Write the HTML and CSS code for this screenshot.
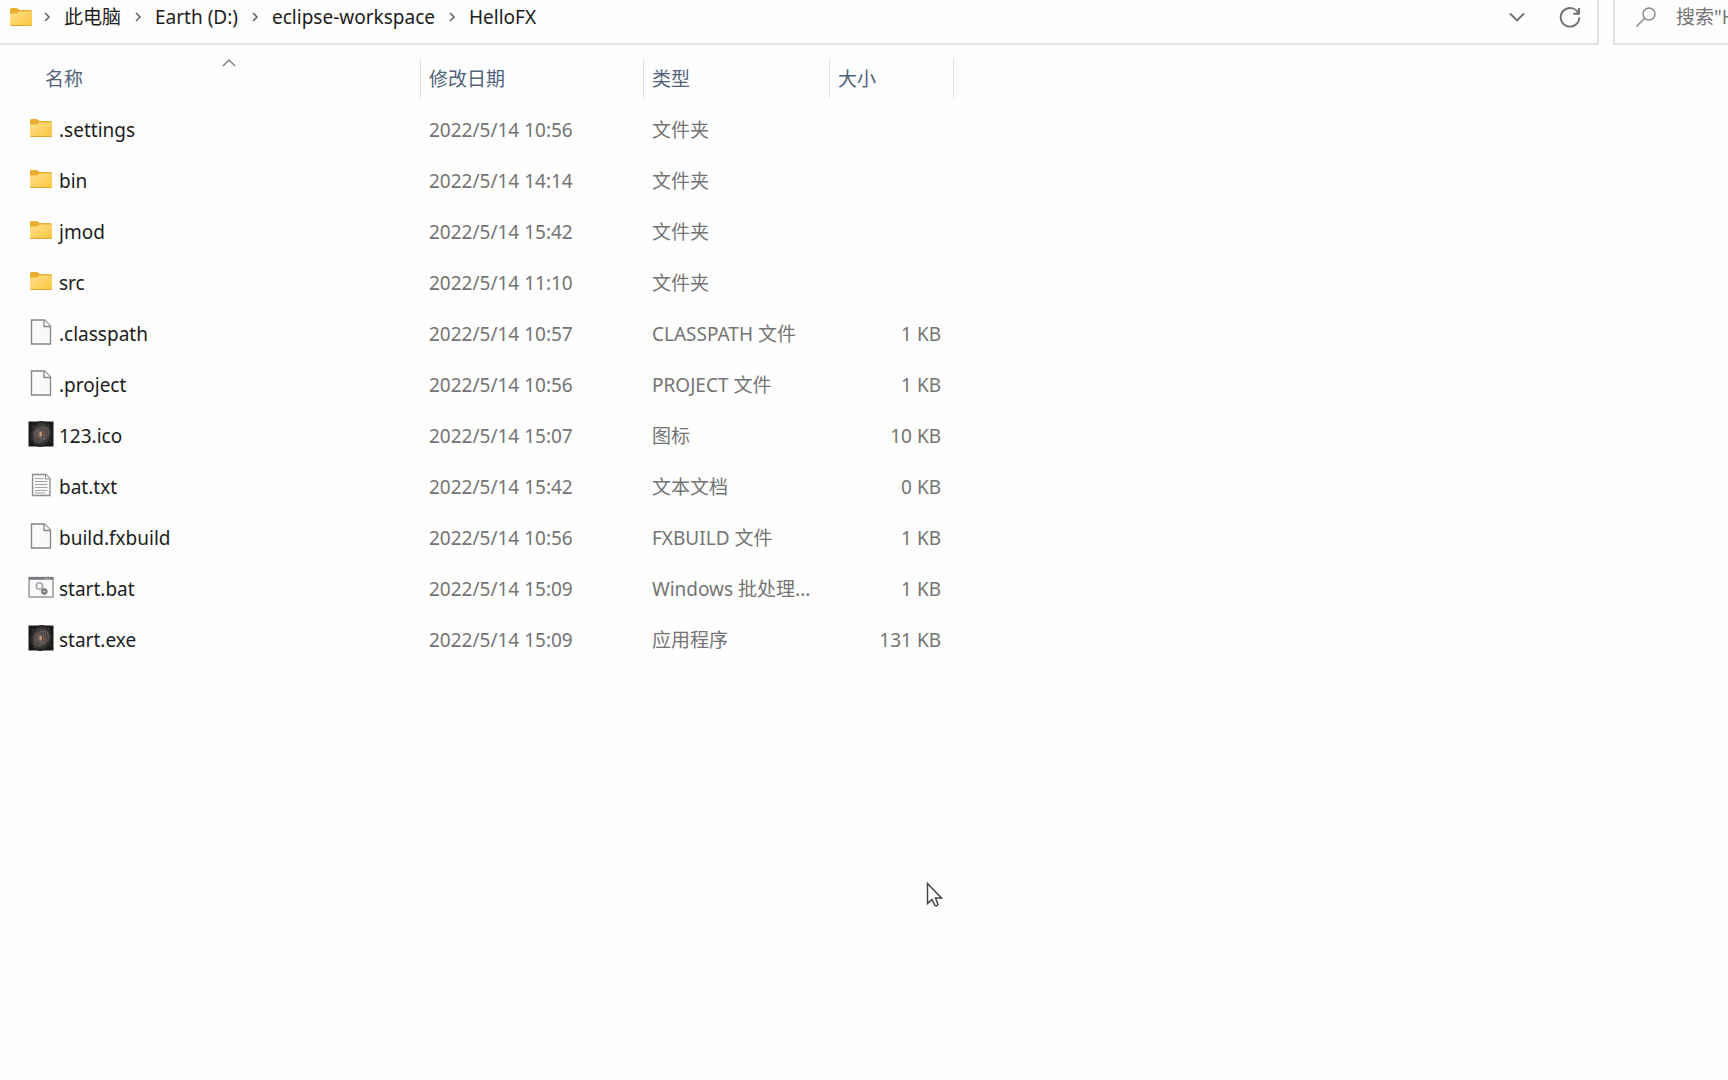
FILE: index.html
```html
<!DOCTYPE html>
<html lang="zh-CN">
<head>
  <meta charset="UTF-8">
  <meta name="viewport" content="width=device-width,initial-scale=1">
  <title>HelloFX</title>
  <link rel="stylesheet" href="styles.css">
</head>
<body>
  <!-- Shared icons -->
  <svg class="sprite" aria-hidden="true">
    <defs>
      <linearGradient id="folderFill" x1="0" y1="0" x2="1" y2="1">
        <stop offset="0" stop-color="#ffe08a"/>
        <stop offset="1" stop-color="#fbc53f"/>
      </linearGradient>
      <radialGradient id="galaxyFill">
        <stop offset="0" stop-color="#a08370"/>
        <stop offset="0.3" stop-color="#625652"/>
        <stop offset="0.7" stop-color="#403b3b"/>
        <stop offset="1" stop-color="#1b1b1d"/>
      </radialGradient>
    </defs>
    <symbol id="folder" viewBox="0 0 26 26">
      <path d="M2 5.5Q2 4 3.5 4H8.6Q9.4 4 10 4.700L11.700 6H22.500Q24 6 24 7.500V12H2z" fill="#e9ae2f"/>
      <path d="M2 9.500H9.300L11.500 7.500H24V20.500Q24 22 22.500 22H3.500Q2 22 2 20.500z" fill="url(#folderFill)"/>
      <path d="M2.500 21.500H23.500" stroke="#e3a52c" stroke-width="1"/>
    </symbol>
    <symbol id="file" viewBox="0 0 26 26">
      <path d="M3.500 1H16.500L22.500 7V25H3.500z" fill="#f9f9f9" stroke="#858585" stroke-width="1.300"/>
      <path d="M16 1V7.500H22.500" fill="#fff" stroke="#858585" stroke-width="1.300"/>
    </symbol>
    <symbol id="text" viewBox="0 0 26 26">
      <path d="M4.500 2.500H18L22 6.500V23.500H4.500z" fill="#f7f7f7" stroke="#8c8c8c" stroke-width="1.300"/>
      <path d="M17.500 2.500V7H22" fill="#fff" stroke="#8c8c8c"/>
      <path d="M7 6.500H15M7 9.500H19.500M7 12.500H19.500M7 15.500H19.500M7 18.500H19.500M7 21H17" stroke="#a5a5a5"/>
    </symbol>
    <symbol id="batch" viewBox="0 0 26 26">
      <rect x="1" y="3.500" width="24" height="19.500" fill="#fafafa" stroke="#8a8a8a" stroke-width="1.300"/>
      <path d="M1 4.500H25" stroke="#74787c" stroke-width="2.500"/>
      <path d="M17 4.500H23" stroke="#d0d0d0" stroke-dasharray="1 1"/>
      <circle cx="11.500" cy="12" r="3" fill="none" stroke="#a3adb3" stroke-width="1.500"/>
      <circle cx="11.500" cy="12" r="4" fill="none" stroke="#a3adb3" stroke-width="1" stroke-dasharray="1.500 1.600"/>
      <circle cx="16.300" cy="17.500" r="2" fill="#d5d5d5" stroke="#777" stroke-width="1.800"/>
      <circle cx="16.300" cy="17.500" r="3.200" fill="none" stroke="#777" stroke-dasharray="1.200 1.300"/>
    </symbol>
    <symbol id="galaxy" viewBox="0 0 26 26">
      <rect x="0.500" y="0.500" width="25" height="25" fill="#1b1b1d"/>
      <ellipse cx="13" cy="13" rx="11" ry="13" fill="url(#galaxyFill)" transform="rotate(15 13 13)"/>
      <path d="M14 9C8 5 4 13 8 19M12 17C18 21 23 14 19 7M9 12C10 5 18 4 21 9M17 14C16 22 8 23 5 18" fill="none" stroke="#77706d" stroke-width="0.800" opacity="0.700"/>
      <path d="M11 8Q16 9 14 16" fill="none" stroke="#1d1a1b" stroke-width="1" opacity="0.500"/>
      <ellipse cx="12.800" cy="13" rx="1.200" ry="2.500" fill="#c49b79"/>
      <path d="M4 5h1M20 4h1M6 22h1M22 20h1M17 8h1" stroke="#66686d"/>
    </symbol>
    <symbol id="crumb" viewBox="0 0 8 12">
      <path d="M2 2L6 6L2 10" fill="none" stroke="#666" stroke-width="1.600"/>
    </symbol>
  </svg>

  <header class="topbar">
    <div class="address">
      <svg class="icon"><use href="#folder"/></svg>
      <nav class="crumbs">
        <svg class="sep"><use href="#crumb"/></svg>
        <a href="#">此电脑</a>
        <svg class="sep"><use href="#crumb"/></svg>
        <a href="#">Earth (D:)</a>
        <svg class="sep"><use href="#crumb"/></svg>
        <a href="#">eclipse-workspace</a>
        <svg class="sep"><use href="#crumb"/></svg>
        <a href="#">HelloFX</a>
      </nav>
      <div class="tools">
        <button type="button" aria-label="展开">
          <svg width="20" height="20" viewBox="0 0 20 20"><path d="M3 6.500L10 13.500L17 6.500" fill="none" stroke="#707070" stroke-width="1.900"/></svg>
        </button>
        <button type="button" aria-label="刷新">
          <svg width="24" height="24" viewBox="0 0 24 24"><path d="M20.500 8.500A9.300 9.300 0 1 0 21.300 12.500M21 3V8.700H15.300" fill="none" stroke="#707070" stroke-width="1.900"/></svg>
        </button>
      </div>
    </div>
    <div class="search">
      <label for="search" aria-label="搜索">
        <svg width="22" height="22" viewBox="0 0 22 22"><circle cx="14" cy="8" r="6" fill="none" stroke="#888" stroke-width="1.500"/><path d="M9.700 12.300L1.500 20.500" stroke="#888" stroke-width="1.500"/></svg>
      </label>
      <input type="text" id="search" placeholder='搜索"HelloFX"'>
    </div>
  </header>

  <main>
    <table class="files">
      <thead>
        <tr>
          <th class="name">
            <button type="button">名称</button>
            <svg class="sort" width="14" height="8" viewBox="0 0 14 8"><path d="M1 7L7 1L13 7" fill="none" stroke="#777" stroke-width="1.300"/></svg>
          </th>
          <th class="date"><button type="button">修改日期</button></th>
          <th class="type"><button type="button">类型</button></th>
          <th class="size"><button type="button">大小</button></th>
        </tr>
      </thead>
      <tbody>
        <tr>
          <td><a href="#"><svg class="icon"><use href="#folder"/></svg>.settings</a></td>
          <td>2022/5/14 10:56</td><td>文件夹</td><td></td>
        </tr>
        <tr>
          <td><a href="#"><svg class="icon"><use href="#folder"/></svg>bin</a></td>
          <td>2022/5/14 14:14</td><td>文件夹</td><td></td>
        </tr>
        <tr>
          <td><a href="#"><svg class="icon"><use href="#folder"/></svg>jmod</a></td>
          <td>2022/5/14 15:42</td><td>文件夹</td><td></td>
        </tr>
        <tr>
          <td><a href="#"><svg class="icon"><use href="#folder"/></svg>src</a></td>
          <td>2022/5/14 11:10</td><td>文件夹</td><td></td>
        </tr>
        <tr>
          <td><a href="#"><svg class="icon"><use href="#file"/></svg>.classpath</a></td>
          <td>2022/5/14 10:57</td><td>CLASSPATH 文件</td><td>1 KB</td>
        </tr>
        <tr>
          <td><a href="#"><svg class="icon"><use href="#file"/></svg>.project</a></td>
          <td>2022/5/14 10:56</td><td>PROJECT 文件</td><td>1 KB</td>
        </tr>
        <tr>
          <td><a href="#"><svg class="icon"><use href="#galaxy"/></svg>123.ico</a></td>
          <td>2022/5/14 15:07</td><td>图标</td><td>10 KB</td>
        </tr>
        <tr>
          <td><a href="#"><svg class="icon"><use href="#text"/></svg>bat.txt</a></td>
          <td>2022/5/14 15:42</td><td>文本文档</td><td>0 KB</td>
        </tr>
        <tr>
          <td><a href="#"><svg class="icon"><use href="#file"/></svg>build.fxbuild</a></td>
          <td>2022/5/14 10:56</td><td>FXBUILD 文件</td><td>1 KB</td>
        </tr>
        <tr>
          <td><a href="#"><svg class="icon"><use href="#batch"/></svg>start.bat</a></td>
          <td>2022/5/14 15:09</td><td>Windows 批处理...</td><td>1 KB</td>
        </tr>
        <tr>
          <td><a href="#"><svg class="icon"><use href="#galaxy"/></svg>start.exe</a></td>
          <td>2022/5/14 15:09</td><td>应用程序</td><td>131 KB</td>
        </tr>
      </tbody>
    </table>
  </main>

  <!-- Mouse pointer -->
  <svg class="pointer" width="17" height="26" viewBox="0 0 17 26"><path d="M1.500 1.500V21.500L6 17.500L9 23.500Q11 24.500 12 22.500L9.500 16H15.500z" fill="#fff" stroke="#444" stroke-width="1.500"/></svg>
</body>
</html>
```
FILE: styles.css
```css
* { box-sizing: border-box; }
body { margin: 0; background: #fefefe; color: #1c1c1c; font-family: "Noto Sans", "Noto Sans CJK SC", sans-serif; font-size: 19px; line-height: 26px; }
a { color: inherit; text-decoration: none; }
button { padding: 0; border: none; background: none; color: inherit; font: inherit; cursor: pointer; }
svg { display: block; flex-shrink: 0; }
.sprite { position: absolute; width: 0; height: 0; }
.icon { width: 26px; height: 26px; }

/* Address bar and search box */
.topbar { display: flex; gap: 14px; height: 45px; overflow: hidden; }
.address, .search {
  display: flex;
  align-items: center;
  padding-bottom: 10px;
  border-bottom: 2px solid #e2e2e2;
}
.address { flex: 1; padding-left: 8px; border-right: 2px solid #e2e2e2; }
.crumbs { display: flex; align-items: center; gap: 13px; padding-left: 9px; white-space: nowrap; }
.sep { width: 8px; height: 12px; }
.tools { display: flex; align-items: center; gap: 31px; margin-left: auto; padding-right: 15px; }
.search { width: 115px; gap: 19px; padding-left: 20px; border-left: 2px solid #e2e2e2; }
.search input { flex: 1; min-width: 0; padding: 0; border: none; outline: none; background: none; font: inherit; }
.search input::placeholder { color: #767676; }

/* File list */
.files { table-layout: fixed; width: 954px; margin-top: 13px; border-collapse: separate; border-spacing: 0; }
.files th { position: relative; height: 40px; padding: 2px 0 0 8px; border-right: 1px solid #e2e2e2; color: #52637c; font-weight: normal; text-align: left; }
.files .name { width: 421px; padding-left: 45px; }
.files .date { width: 223px; }
.files .type { width: 186px; }
.sort { position: absolute; top: 1px; left: 222px; }
.files td { height: 51px; padding: 0 0 0 8px; color: #747474; white-space: nowrap; }
.files td:first-child { padding-left: 28px; color: #1c1c1c; }
.files td:last-child { padding-right: 13px; text-align: right; }
.files td a { display: flex; align-items: center; gap: 5px; }
.files .icon { margin: -4px 0 0; }
tbody::before { content: ""; display: table-row; height: 6px; }

.pointer { position: absolute; left: 926px; top: 882px; }
```
